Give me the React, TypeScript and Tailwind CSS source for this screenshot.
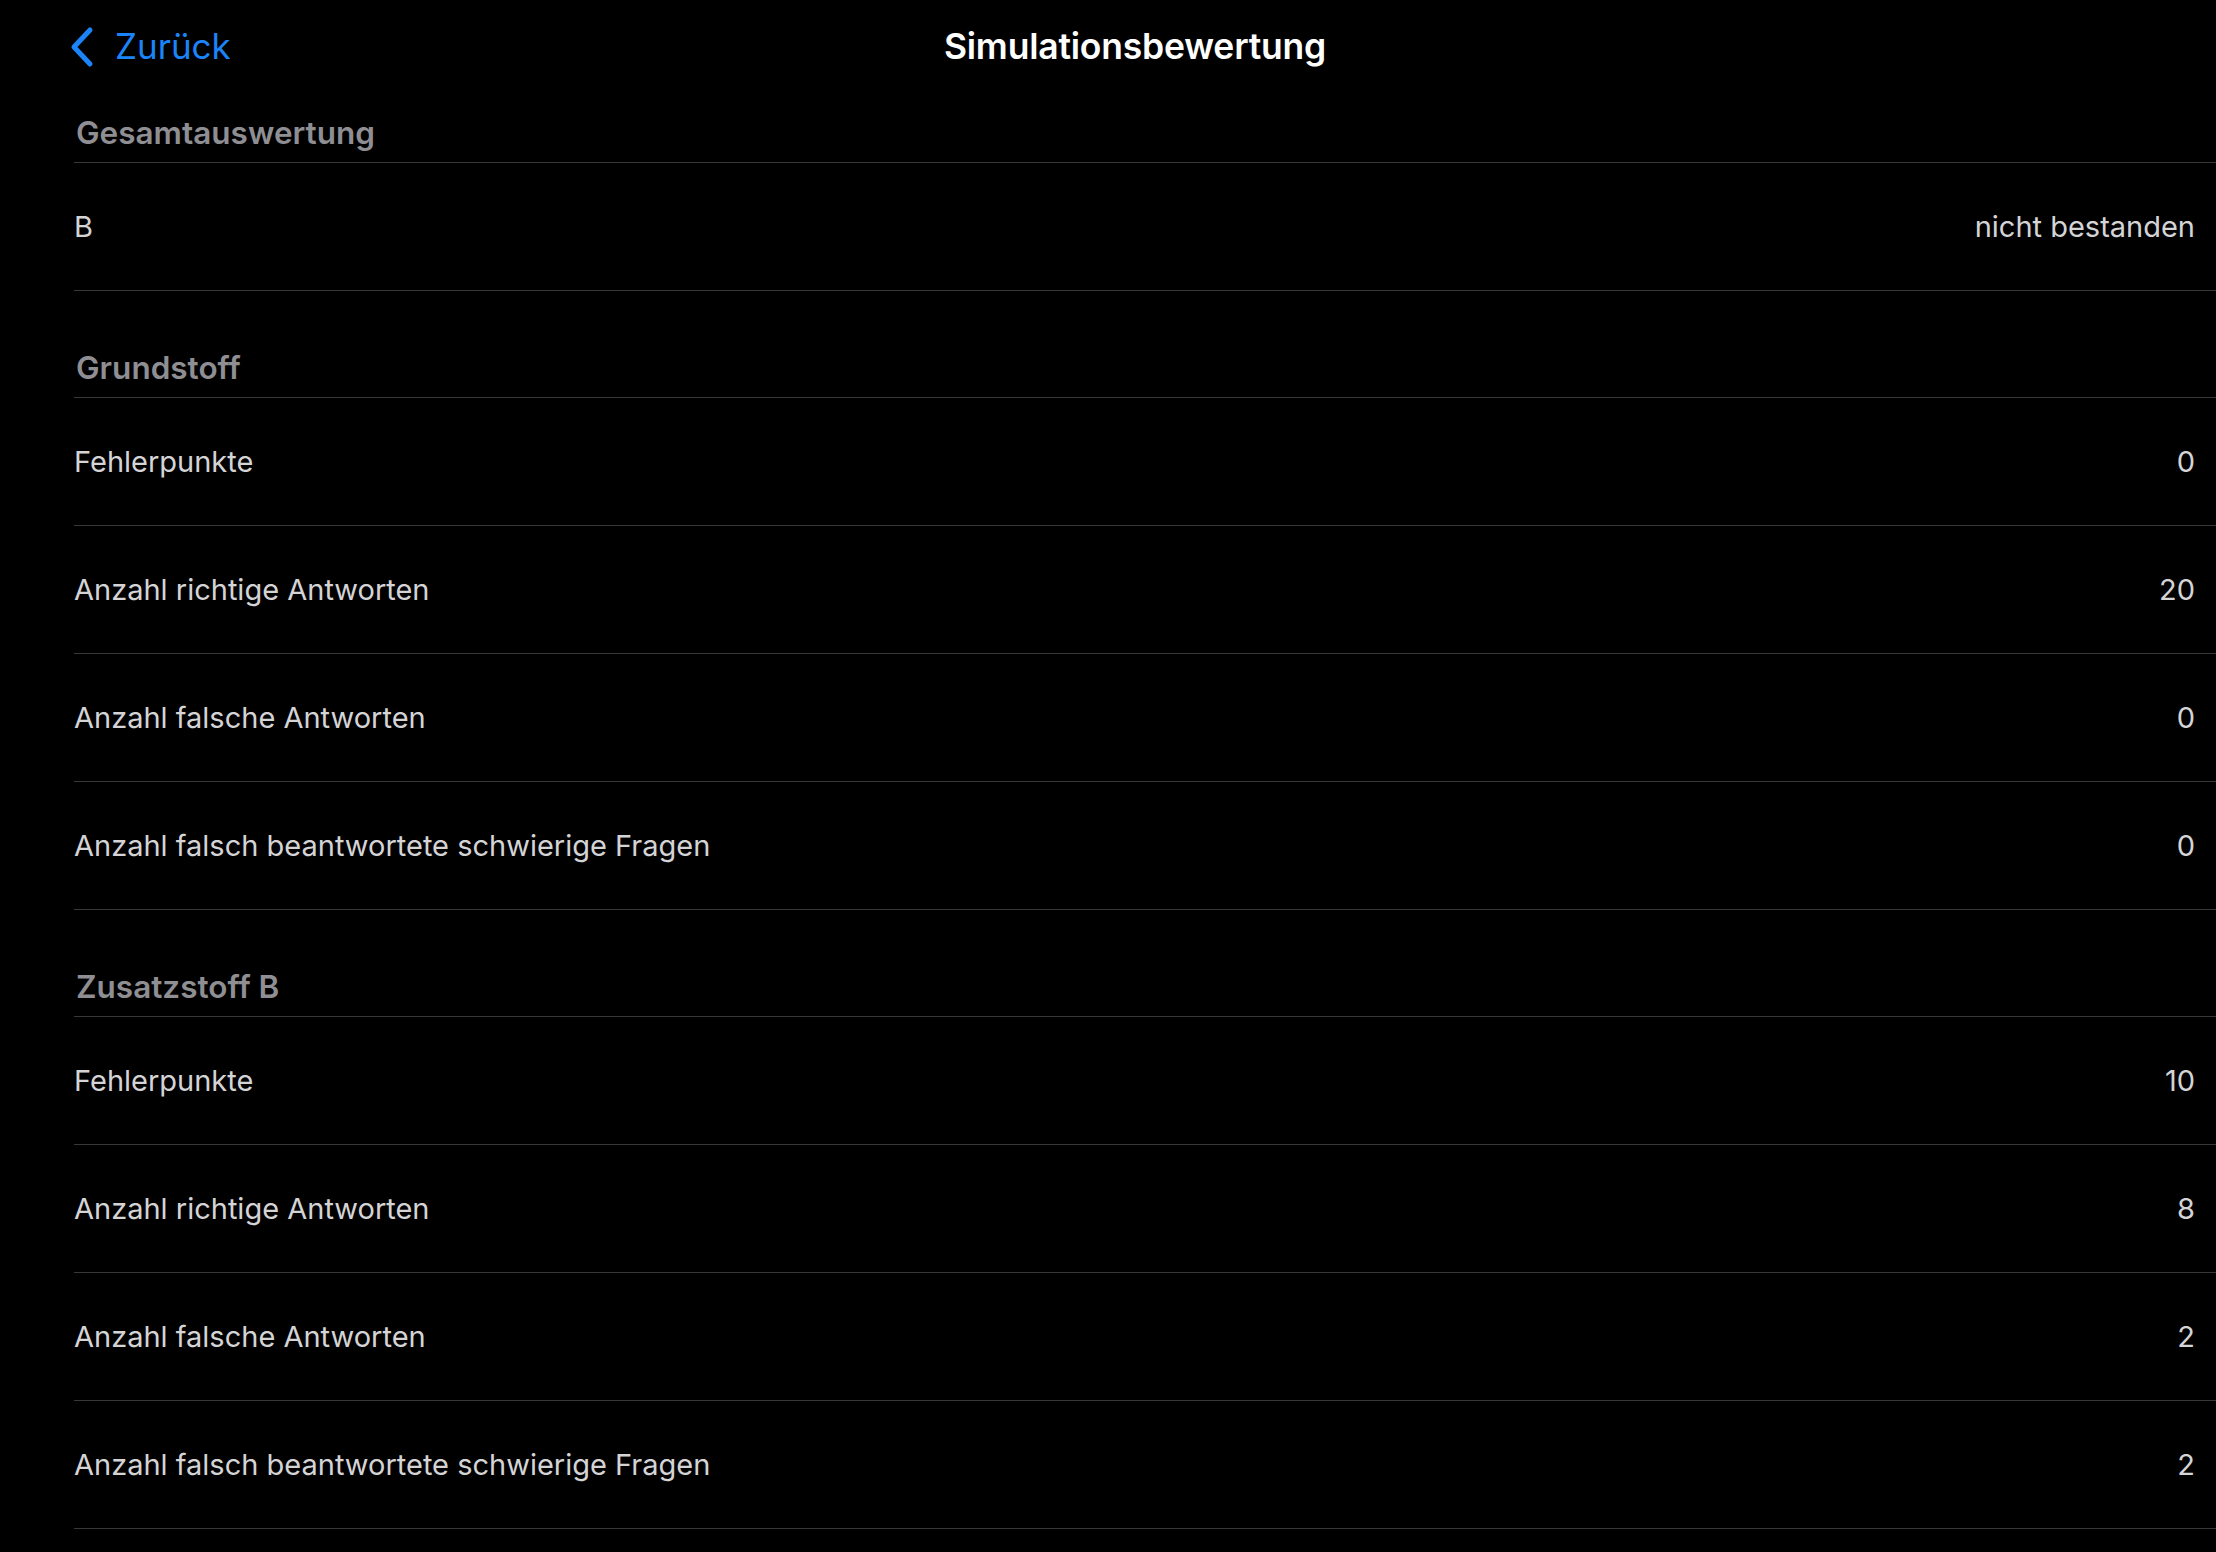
import React from "react";

type Row = { label: string; value: string };
type Section = { title: string; rows: Row[] };

const sections: Section[] = [
  {
    title: "Gesamtauswertung",
    rows: [{ label: "B", value: "nicht bestanden" }],
  },
  {
    title: "Grundstoff",
    rows: [
      { label: "Fehlerpunkte", value: "0" },
      { label: "Anzahl richtige Antworten", value: "20" },
      { label: "Anzahl falsche Antworten", value: "0" },
      { label: "Anzahl falsch beantwortete schwierige Fragen", value: "0" },
    ],
  },
  {
    title: "Zusatzstoff B",
    rows: [
      { label: "Fehlerpunkte", value: "10" },
      { label: "Anzahl richtige Antworten", value: "8" },
      { label: "Anzahl falsche Antworten", value: "2" },
      { label: "Anzahl falsch beantwortete schwierige Fragen", value: "2" },
    ],
  },
];

const ChevronLeft: React.FC = () => (
  <svg width="26" height="42" viewBox="0 0 26 42" fill="none">
    <path
      d="M21 4 L5 21 L21 38"
      stroke="#1a84f8"
      strokeWidth="5"
      strokeLinecap="round"
      strokeLinejoin="round"
    />
  </svg>
);

const App: React.FC = () => {
  return (
    <div className="min-h-screen bg-black font-['Inter','Noto_Sans',sans-serif] text-[#d4d4d6]">
      {/* Navigationsleiste */}
      <header className="grid h-[94px] grid-cols-[1fr_auto_1fr] items-center">
        <button className="flex items-center gap-[20px] pl-[69px] text-[35px] leading-none text-[#1a84f8]">
          <ChevronLeft />
          <span className="pb-[2px]">Zurück</span>
        </button>
        <h1 className="pl-[54px] text-[35.5px] font-semibold leading-none tracking-[-0.2px] text-white">
          Simulationsbewertung
        </h1>
        <div />
      </header>

      <main className="pl-[74px]">
        {sections.map((section, i) => (
          <section key={section.title} className={i > 0 ? "mt-[38px]" : ""}>
            <div className="flex h-[69px] items-end border-b border-[#38383a] pb-[11px] pl-[2px]">
              <h2 className="text-[31.5px] font-semibold leading-[36px] text-[#8e8e93]">
                {section.title}
              </h2>
            </div>
            {section.rows.map((row) => (
              <div
                key={row.label}
                className="flex h-[128px] items-center justify-between border-b border-[#38383a] pr-[21px] text-[29px] leading-none"
              >
                <span>{row.label}</span>
                <span>{row.value}</span>
              </div>
            ))}
          </section>
        ))}
      </main>
    </div>
  );
};

export default App;
